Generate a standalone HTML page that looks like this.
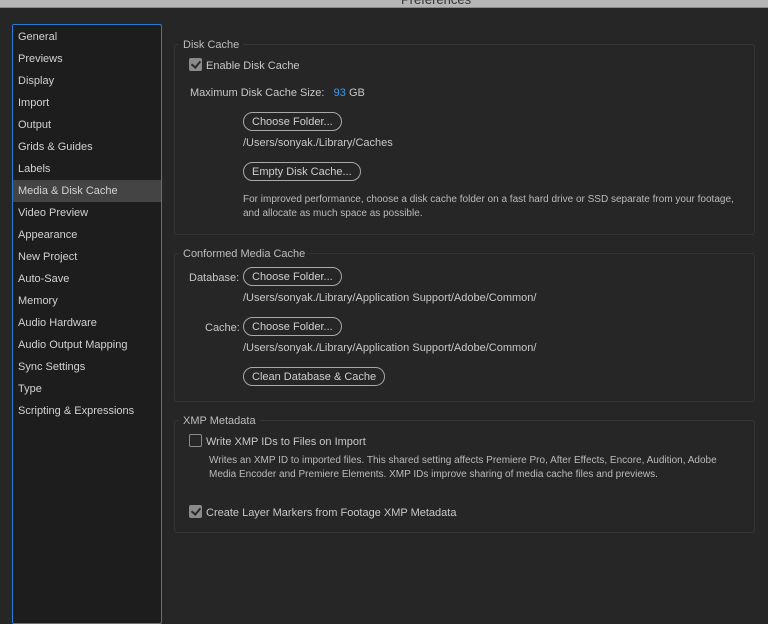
<!DOCTYPE html>
<html><head><meta charset="utf-8"><style>
*{margin:0;padding:0;box-sizing:border-box}
body{width:768px;height:616px;background:#262626;font-family:"Liberation Sans",sans-serif;font-size:11px;color:#c8c8c8;position:relative;overflow:hidden}
.a{position:absolute;white-space:nowrap;margin-top:1px}
#tb{position:absolute;left:0;top:0;width:768px;height:8px;background:#b5b5b5;border-bottom:1px solid #8a8a8a;overflow:hidden}
#tb span{position:absolute;left:401px;top:-8px;font-size:13px;color:#333}
#side{position:absolute;left:12px;top:24px;width:150px;height:600px;background:#1d1d1d;border:1px solid #2d7ad6;border-radius:2px;padding-top:1px}
#side div{height:22px;line-height:22px;padding-left:5px;color:#d2d2d2}
#side .sel{background:#444}
.grp{position:absolute;left:174px;width:581px;border:1px solid #353535;border-radius:3px}
.gt{position:absolute;background:#262626;padding:0 4px;color:#bdbdbd}
.btn{position:absolute;height:19px;border:1.5px solid #a8a8a8;border-radius:10px;line-height:18px;padding:0 8px;color:#cfcfcf}
.cb{position:absolute;width:13px;height:13px;border:1.5px solid #8a8a8a;border-radius:2px}
.cb.on{background:#8a8a8a}
.cb.on:after{content:"";position:absolute;left:3px;top:0px;width:4px;height:7px;border:solid #2a2a2a;border-width:0 2px 2px 0;transform:rotate(40deg)}
.sm{font-size:10px;line-height:14px;color:#bbb}
</style></head><body>
<div id="tb"><span>Preferences</span></div>
<div id="side">
<div>General</div><div>Previews</div><div>Display</div><div>Import</div><div>Output</div><div>Grids &amp; Guides</div><div>Labels</div><div class="sel">Media &amp; Disk Cache</div><div>Video Preview</div><div>Appearance</div><div>New Project</div><div>Auto-Save</div><div>Memory</div><div>Audio Hardware</div><div>Audio Output Mapping</div><div>Sync Settings</div><div>Type</div><div>Scripting &amp; Expressions</div>
</div>

<div class="grp" style="top:44px;height:191px"></div>
<div class="gt a" style="left:179px;top:38px">Disk Cache</div>
<div class="cb on" style="left:189px;top:58px"></div>
<div class="a" style="left:206px;top:59px">Enable Disk Cache</div>
<div class="a" style="left:190px;top:86px">Maximum Disk Cache Size:&nbsp;&nbsp;&nbsp;<span style="color:#3d9bf0">93</span> GB</div>
<div class="btn" style="left:243px;top:112px">Choose Folder...</div>
<div class="a" style="left:243px;top:136px">/Users/sonyak./Library/Caches</div>
<div class="btn" style="left:243px;top:162px">Empty Disk Cache...</div>
<div class="a sm" style="left:243px;top:192px">For improved performance, choose a disk cache folder on a fast hard drive or SSD separate from your footage,<br>and allocate as much space as possible.</div>

<div class="grp" style="top:253px;height:149px"></div>
<div class="gt a" style="left:179px;top:247px">Conformed Media Cache</div>
<div class="a" style="left:189px;top:271px">Database:</div>
<div class="btn" style="left:243px;top:267px">Choose Folder...</div>
<div class="a" style="left:243px;top:291px">/Users/sonyak./Library/Application Support/Adobe/Common/</div>
<div class="a" style="left:205px;top:321px">Cache:</div>
<div class="btn" style="left:243px;top:317px">Choose Folder...</div>
<div class="a" style="left:243px;top:341px">/Users/sonyak./Library/Application Support/Adobe/Common/</div>
<div class="btn" style="left:243px;top:367px">Clean Database &amp; Cache</div>

<div class="grp" style="top:420px;height:113px"></div>
<div class="gt a" style="left:179px;top:414px">XMP Metadata</div>
<div class="cb" style="left:189px;top:434px"></div>
<div class="a" style="left:206px;top:435px">Write XMP IDs to Files on Import</div>
<div class="a sm" style="left:209px;top:453px">Writes an XMP ID to imported files. This shared setting affects Premiere Pro, After Effects, Encore, Audition, Adobe<br>Media Encoder and Premiere Elements. XMP IDs improve sharing of media cache files and previews.</div>
<div class="cb on" style="left:189px;top:505px"></div>
<div class="a" style="left:206px;top:506px">Create Layer Markers from Footage XMP Metadata</div>
</body></html>
